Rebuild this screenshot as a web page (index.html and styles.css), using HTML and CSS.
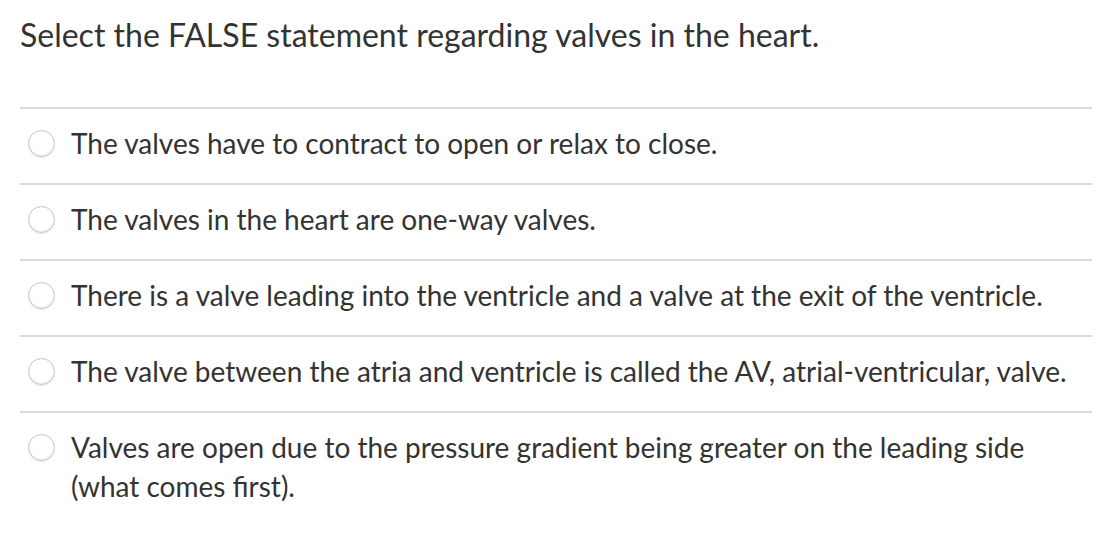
FILE: index.html
```html
<!DOCTYPE html>
<html>
<head>
<meta charset="utf-8">
<link rel="stylesheet" href="styles.css">
</head>
<body>
<div class="question">
  <h1 class="prompt">Select the FALSE statement regarding valves in the heart.</h1>
  <div class="answers">
    <label class="answer"><span class="radio"></span><span class="text">The valves have to contract to open or relax to close.</span></label>
    <label class="answer"><span class="radio"></span><span class="text">The valves in the heart are one-way valves.</span></label>
    <label class="answer"><span class="radio"></span><span class="text">There is a valve leading into the ventricle and a valve at the exit of the ventricle.</span></label>
    <label class="answer"><span class="radio"></span><span class="text">The valve between the atria and ventricle is called the AV, atrial-ventricular, valve.</span></label>
    <label class="answer"><span class="radio"></span><span class="text">Valves are open due to the pressure gradient being greater on the leading side (what comes first).</span></label>
  </div>
</div>
</body>
</html>
```

FILE: styles.css
```css
html, body {
  margin: 0;
  padding: 0;
  background: #fff;
}
body {
  font-family: Lato, "Open Sans", sans-serif;
  color: #333;
}
.question {
  width: 1072px;
  margin-left: 20px;
}
.prompt {
  font-size: 32px;
  font-weight: 400;
  line-height: 40px;
  margin: 15px 0 52px 0;
}
.answer {
  display: flex;
  align-items: flex-start;
  border-top: 2px solid #dcdcdc;
  padding: 15px 0 20px;
  font-size: 28px;
  line-height: 39px;
}
.radio {
  flex: none;
  box-sizing: border-box;
  width: 27px;
  height: 27px;
  border: 1px solid #c4c4c4;
  border-radius: 50%;
  box-shadow: inset 0 -1px 2px rgba(0,0,0,0.08), 0 1px 1px rgba(0,0,0,0.08);
  margin: 6px 16px 0 8px;
}
.text {
  flex: 1;
  padding-right: 8px;
}
```
